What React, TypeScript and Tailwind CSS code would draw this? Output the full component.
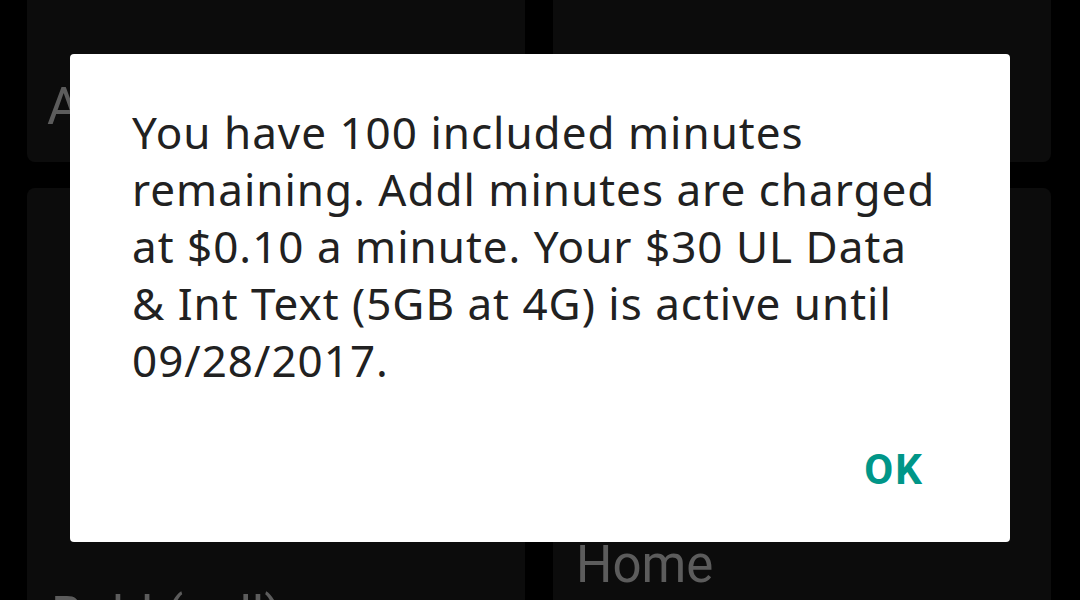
import React from "react";

export default function App() {
  return (
    <div className="relative w-[1080px] h-[600px] overflow-hidden bg-black" style={{ fontFamily: "Roboto, 'Noto Sans', sans-serif" }}>
      <div className="grid grid-cols-[498px_498px] gap-x-[28px] pl-[27px]">
        <div className="h-[162px] rounded-b-lg bg-[#0c0c0c] pl-5 pt-[81px]">
          <div className="text-[51px] leading-[52px] text-[#5c5c5c]">A</div>
        </div>
        <div className="h-[162px] rounded-b-lg bg-[#0c0c0c]"></div>
        <div className="mt-[26px] h-[440px] rounded-t-lg bg-[#0c0c0c] pl-[24px] pt-[402px]">
          <div className="text-[51px] leading-[52px] text-[#5c5c5c]">Bold (null)</div>
        </div>
        <div className="mt-[26px] h-[440px] rounded-t-lg bg-[#0c0c0c] pl-[23px] pt-[351px]">
          <div className="text-[51px] leading-[52px] text-[#5c5c5c]">Home</div>
        </div>
      </div>

      <div className="absolute left-[70px] top-[54px] flex h-[488px] w-[940px] flex-col rounded-[4px] bg-white">
        <div
          className="pl-[62px] pr-[60px] pt-[50px] text-[44px] leading-[57px] tracking-[1px] text-[#212121]"
          style={{ fontFamily: "'Noto Sans', sans-serif" }}
        >
          You have 100 included minutes remaining. Addl minutes are charged at $0.10 a minute. Your $30 UL Data &amp; Int Text (5GB at 4G) is active until 09/28/2017.
        </div>
        <div className="mt-auto flex justify-end pb-[48px] pr-[86px]">
          <span className="text-[42px] font-bold leading-[48px] tracking-[2px] text-[#009688]" style={{ fontFamily: "Roboto, sans-serif" }}>
            OK
          </span>
        </div>
      </div>
    </div>
  );
}
